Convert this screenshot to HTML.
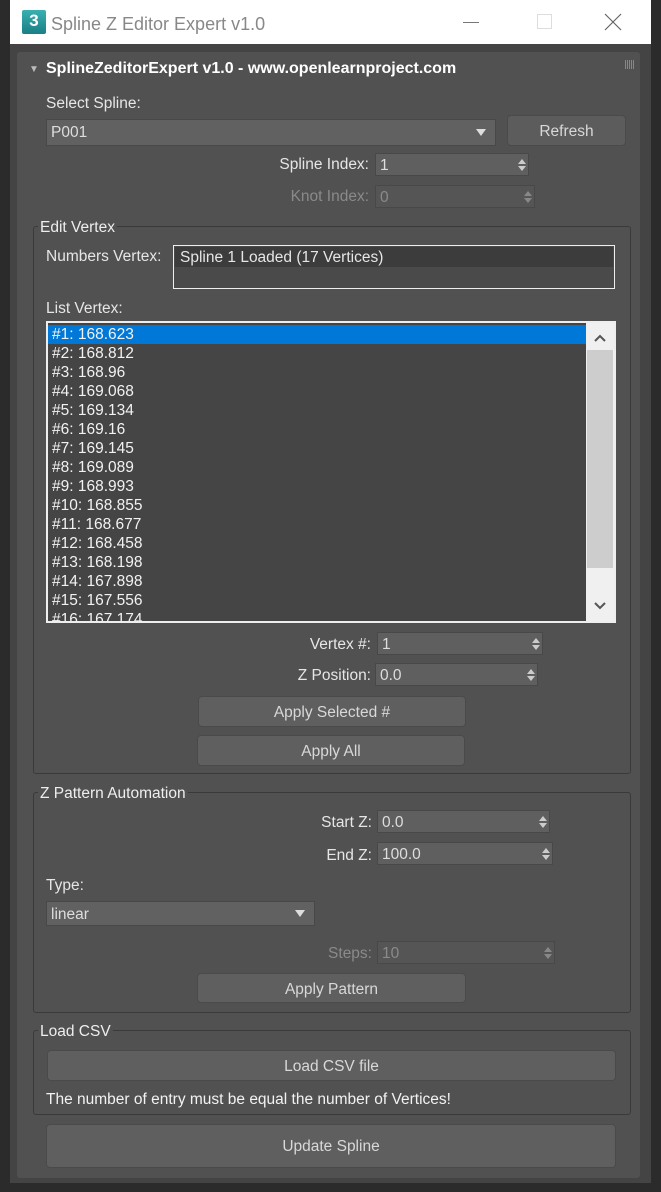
<!DOCTYPE html>
<html><head><meta charset="utf-8"><style>
*{box-sizing:border-box;margin:0;padding:0}
body{width:661px;height:1192px;background:#2b2b2b;position:relative;overflow:hidden;font-family:"Liberation Sans",sans-serif;font-size:15.5px;color:#e6e6e6}
.a{position:absolute}
.t{position:absolute;white-space:nowrap;line-height:18px;margin-top:2px}
.win{left:10px;top:0;width:641px;height:1183px;background:#444}
.title{left:10px;top:0;width:641px;height:44px;background:#fff}
.roll{left:17px;top:52px;width:623px;height:1126px;background:#515151;border-radius:3px}
.grp{position:absolute;border:1px solid #3a3a3a;border-radius:3px}
.gl{position:absolute;background:#515151;padding:0 2px;line-height:18px;color:#eee;margin-top:2px}
.inp{position:absolute;background:#5f5f5f;border:1px solid #484848;color:#ddd;padding-left:4px;line-height:23px}
.dis{background:#555;color:#8a8a8a}
.btn{position:absolute;background:#5f5f5f;border:1px solid #4a4a4a;border-radius:4px;text-align:center;color:#d8d8d8}
.sp{position:absolute;right:6px;top:5px;width:0;height:0}
.sp:before{content:"";position:absolute;left:-4px;top:0;border:4px solid transparent;border-top:0;border-bottom:5px solid #ccc}
.sp:after{content:"";position:absolute;left:-4px;top:7px;border:4px solid transparent;border-bottom:0;border-top:5px solid #ccc}
.dis .sp:before{border-bottom-color:#888}.dis .sp:after{border-top-color:#888}
.arr{position:absolute;right:9px;top:9px;border:5px solid transparent;border-bottom:0;border-top:7px solid #ddd}
.row{height:19px;line-height:20px;padding-left:4px;color:#f2f2f2}
</style></head><body>
<div class="a win"></div>
<div class="a title"></div>
<div class="a" style="left:22px;top:10px;width:24px;height:24px;background:linear-gradient(#3ab0b0,#1a7f85);border-radius:2px;color:#fff;font-weight:bold;font-size:17px;line-height:22px;text-align:center">3</div>
<div class="t" style="left:51px;top:13px;font-size:18px;color:#888">Spline Z Editor Expert v1.0</div>
<div class="a" style="left:463px;top:22px;width:16px;height:1px;background:#777"></div>
<div class="a" style="left:537px;top:14px;width:15px;height:15px;border:1px solid #ddd"></div>
<svg class="a" style="left:604px;top:13px" width="18" height="18"><path d="M1 1L17 17M17 1L1 17" stroke="#666" stroke-width="1.2"/></svg>
<div class="a roll"></div>
<div class="t" style="left:29px;top:59px;font-size:10px;color:#bbb">▼</div>
<div class="t" style="left:46px;top:58px;font-weight:bold;font-size:16px;color:#fff">SplineZeditorExpert v1.0 - www.openlearnproject.com</div>
<div class="a" style="left:625px;top:60px;width:9px;height:9px;background:repeating-linear-gradient(90deg,#888 0 1px,transparent 1px 2px)"></div>

<div class="t" style="left:46px;top:93px">Select Spline:</div>
<div class="inp" style="left:46px;top:119px;width:450px;height:27px;line-height:26px;background:#616161">P001<span class="arr"></span></div>
<div class="btn" style="left:507px;top:115px;width:119px;height:31px;line-height:31px;background:#5c5c5c">Refresh</div>
<div class="t" style="right:292px;top:154px">Spline Index:</div>
<div class="inp" style="left:375px;top:153px;width:154px;height:23px">1<span class="sp"></span></div>
<div class="t" style="right:292px;top:186px;color:#8a8a8a">Knot Index:</div>
<div class="inp dis" style="left:375px;top:185px;width:160px;height:23px">0<span class="sp"></span></div>

<div class="grp" style="left:33px;top:226px;width:598px;height:548px"></div>
<div class="gl" style="left:38px;top:217px">Edit Vertex</div>
<div class="t" style="left:46px;top:246px">Numbers Vertex:</div>
<div class="a" style="left:173px;top:245px;width:442px;height:44px;border:1px solid #eee;background:#4a4a4a"><div style="background:#3c3c3c;height:20px;line-height:22px;padding-left:5px;margin:1px">Spline 1 Loaded (17 Vertices)</div></div>
<div class="t" style="left:46px;top:298px">List Vertex:</div>
<div class="a" style="left:46px;top:321px;width:570px;height:302px;border:2px solid #eee;background:#454545;overflow:hidden">
<div style="position:absolute;left:0;top:2px;width:538px">
<div class="row" style="background:#0078d7">#1: 168.623</div>
<div class="row">#2: 168.812</div><div class="row">#3: 168.96</div><div class="row">#4: 169.068</div><div class="row">#5: 169.134</div><div class="row">#6: 169.16</div><div class="row">#7: 169.145</div><div class="row">#8: 169.089</div><div class="row">#9: 168.993</div><div class="row">#10: 168.855</div><div class="row">#11: 168.677</div><div class="row">#12: 168.458</div><div class="row">#13: 168.198</div><div class="row">#14: 167.898</div><div class="row">#15: 167.556</div><div class="row">#16: 167.174</div>
</div>
<div style="position:absolute;right:0;top:0;width:28px;height:298px;background:#f0f0f0">
<div style="position:absolute;left:1px;top:27px;width:26px;height:218px;background:#cdcdcd"></div>
<svg style="position:absolute;left:8px;top:11px" width="12" height="8"><path d="M1 7L6 2L11 7" stroke="#555" stroke-width="2" fill="none"/></svg>
<svg style="position:absolute;left:8px;top:279px" width="12" height="8"><path d="M1 1L6 6L11 1" stroke="#555" stroke-width="2" fill="none"/></svg>
</div></div>
<div class="t" style="right:290px;top:634px">Vertex #:</div>
<div class="inp" style="left:377px;top:632px;width:166px;height:23px">1<span class="sp"></span></div>
<div class="t" style="right:290px;top:665px">Z Position:</div>
<div class="inp" style="left:375px;top:663px;width:163px;height:23px">0.0<span class="sp"></span></div>
<div class="btn" style="left:198px;top:696px;width:268px;height:31px;line-height:31px">Apply Selected #</div>
<div class="btn" style="left:197px;top:735px;width:268px;height:31px;line-height:31px">Apply All</div>

<div class="grp" style="left:33px;top:792px;width:598px;height:221px"></div>
<div class="gl" style="left:38px;top:783px">Z Pattern Automation</div>
<div class="t" style="right:289px;top:812px">Start Z:</div>
<div class="inp" style="left:377px;top:810px;width:173px;height:23px">0.0<span class="sp"></span></div>
<div class="t" style="right:289px;top:845px">End Z:</div>
<div class="inp" style="left:377px;top:842px;width:176px;height:23px">100.0<span class="sp"></span></div>
<div class="t" style="left:46px;top:875px">Type:</div>
<div class="inp" style="left:46px;top:901px;width:269px;height:25px;line-height:25px;background:#616161">linear<span class="arr" style="top:8px"></span></div>
<div class="t" style="right:289px;top:943px;color:#8a8a8a">Steps:</div>
<div class="inp dis" style="left:377px;top:941px;width:178px;height:23px">10<span class="sp"></span></div>
<div class="btn" style="left:197px;top:973px;width:269px;height:30px;line-height:31px">Apply Pattern</div>

<div class="grp" style="left:33px;top:1030px;width:598px;height:85px"></div>
<div class="gl" style="left:38px;top:1021px">Load CSV</div>
<div class="btn" style="left:47px;top:1050px;width:569px;height:31px;line-height:31px">Load CSV file</div>
<div class="t" style="left:46px;top:1089px;color:#f2f2f2">The number of entry must be equal the number of Vertices!</div>
<div class="btn" style="left:46px;top:1124px;width:570px;height:44px;line-height:44px">Update Spline</div>
</body></html>
